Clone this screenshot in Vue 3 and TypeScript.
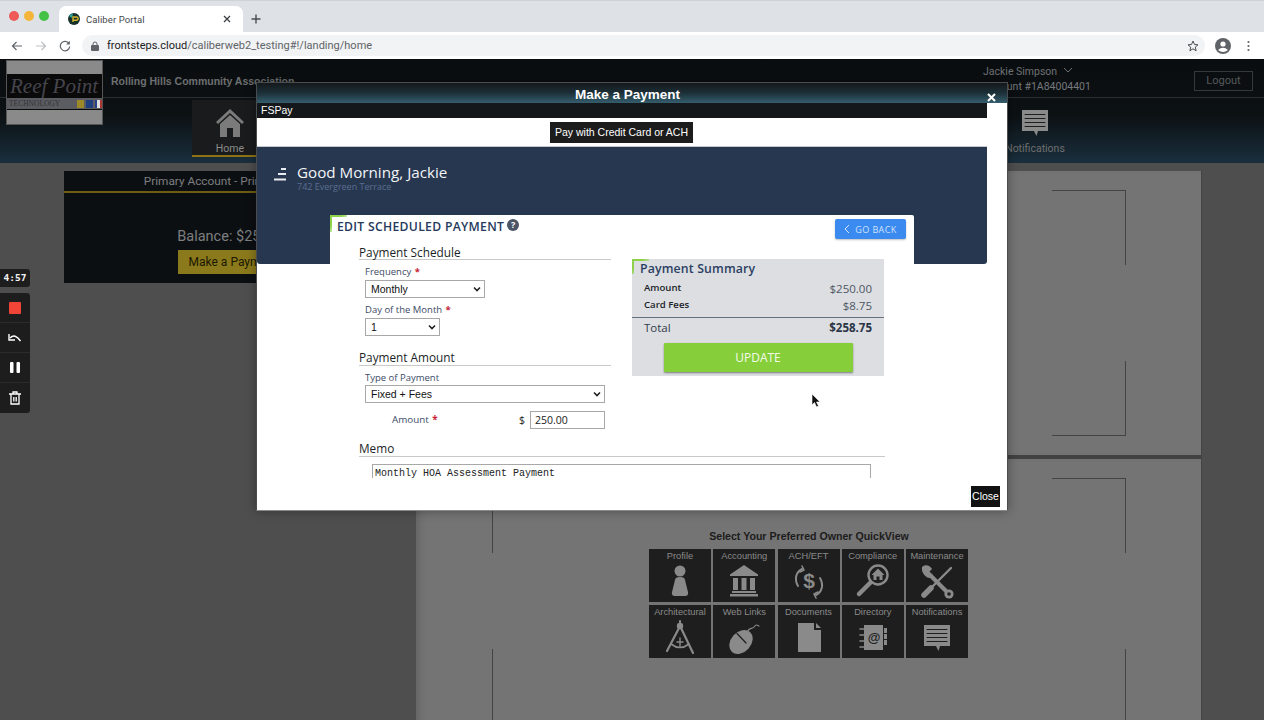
<script setup lang="ts">
type Shape = { t: string; a: Record<string, string | number>; x?: string }
const ink = '#8a8a8a'
const bg = '#1e1e1e'
const fill = (d: string, color = ink): Shape => ({ t: 'path', a: { d, fill: color } })
const line = (d: string, w = 2, color = ink): Shape => ({
  t: 'path',
  a: { d, fill: 'none', stroke: color, 'stroke-width': w, 'stroke-linecap': 'round', 'stroke-linejoin': 'round' },
})
const dot = (cx: number, cy: number, r: number, color = ink): Shape => ({ t: 'circle', a: { cx, cy, r, fill: color } })
const glyph = (x: number, y: number, size: number, s: string, color = ink): Shape => ({
  t: 'text',
  a: { x, y, 'font-size': size, 'font-weight': 700, 'text-anchor': 'middle', fill: color, 'font-family': 'Liberation Sans, sans-serif' },
  x: s,
})

const bubble: Shape[] = [
  fill('M5 5H31V26H21L19.5 31L17 26H5Z'),
  line('M8 9.5H28M8 13.5H28M8 17.5H28M8 21.5H28', 1, bg),
]

const tiles: { label: string; shapes: Shape[] }[] = [
  {
    label: 'Profile',
    shapes: [dot(18, 7, 5.5), fill('M13 16c0-2 2-3 5-3s5 1 5 3l3 12c.5 3-1 4-3 4H13c-2 0-3.5-1-3-4z')],
  },
  {
    label: 'Accounting',
    shapes: [
      fill('M18 1L32 10.5V12H4V10.5Z'),
      fill('M7 14h5v12H7zM15.5 14h5v12h-5zM24 14h5v12h-5z'),
      fill('M6 27h24v2H6zM4 30h28v2.5H4z'),
    ],
  },
  {
    label: 'ACH/EFT',
    shapes: [
      glyph(18, 24, 21, '$'),
      line('M11 5C5 8 3 15 7 22', 2),
      line('M11 2L13 6L9 8', 1.6),
      line('M25 31C31 28 33 21 29 14', 2),
      line('M25 34L23 30L27 28', 1.6),
    ],
  },
  {
    label: 'Compliance',
    shapes: [
      { t: 'circle', a: { cx: 23, cy: 11, r: 9.5, fill: 'none', stroke: ink, 'stroke-width': 2.4 } },
      fill('M23 4.5L29.5 11H27.5V16H24.5V12.5H21.5V16H18.5V11H16.5Z'),
      line('M15.5 18.5L4 30', 4.5),
    ],
  },
  {
    label: 'Maintenance',
    shapes: [
      line('M32 4L10 26', 2.4),
      line('M12 24L5 31', 5.5),
      line('M8 8L30 30', 4),
      fill('M3 3C6 0 11 1 13 5L10 8L14 11L11 14C7 14 2 9 3 3Z'),
      dot(30, 30, 4.6),
      dot(30, 30, 1.8, bg),
    ],
  },
  {
    label: 'Architectural',
    shapes: [
      dot(18, 6, 3.2),
      line('M18 1V4', 2),
      line('M16.5 9L5 31M19.5 9L31 33', 2.2),
      line('M9 24Q18 31 27 24', 1.6),
      line('M18 18V27M15 22H21', 1.4),
    ],
  },
  {
    label: 'Web Links',
    shapes: [
      { t: 'ellipse', a: { cx: 15, cy: 22, rx: 10, ry: 13.5, fill: ink, transform: 'rotate(42 15 22)' } },
      line('M11 13.5L20 23', 1.2, bg),
      line('M21 13C23 6 26 10 28 7S31 5 33 6', 1.2),
    ],
  },
  {
    label: 'Documents',
    shapes: [fill('M7 3H23V10H30V32H7Z'), fill('M25 3L30 8H25Z')],
  },
  {
    label: 'Directory',
    shapes: [
      fill('M9 5H28V30H9Z'),
      fill('M29 8h3v5h-3zM29 14h3v5h-3zM29 20h3v5h-3z'),
      line('M5 9H11M5 15H11M5 21H11M5 27H11', 1.6),
      glyph(19, 22, 13, '@', bg),
    ],
  },
  { label: 'Notifications', shapes: bubble },
]

const corners = ['tl', 'tr', 'bl', 'br']
</script>

<template>
  <div class="screen">
    <div class="tabstrip">
      <div class="lights">
        <span class="light red"></span><span class="light amber"></span><span class="light green"></span>
      </div>
      <div class="tab">
        <svg class="favicon" viewBox="0 0 12 12" width="12" height="12">
          <circle cx="6" cy="6" r="6" fill="#16302c" />
          <path d="M1 3Q2 1 5 1L4 5Z" fill="#2aa6a0" />
          <path d="M5 9V4H8.5A1.6 1.6 0 0 1 8.5 7.2H5" fill="none" stroke="#d8b52c" stroke-width="1.4" />
        </svg>
        <span class="tab-title">Caliber Portal</span>
        <svg class="tab-x" viewBox="0 0 8 8" width="8" height="8"><path d="M1 1L7 7M7 1L1 7" stroke="#3c4043" stroke-width="1.3" /></svg>
      </div>
      <svg class="new-tab" viewBox="0 0 10 10" width="10" height="10"><path d="M5 .5V9.500M.5 5H9.500" stroke="#4a4d51" stroke-width="1.4" /></svg>
    </div>

    <div class="toolbar">
      <svg viewBox="0 0 12 12" width="12" height="12"><path d="M11 6H1.500M5.500 2L1.500 6L5.500 10" fill="none" stroke="#5f6368" stroke-width="1.2" /></svg>
      <svg viewBox="0 0 12 12" width="12" height="12"><path d="M1 6H10.500M6.500 2L10.500 6L6.500 10" fill="none" stroke="#bcbfc3" stroke-width="1.2" /></svg>
      <svg viewBox="0 0 12 12" width="12" height="12"><path d="M10 3.600A4.700 4.700 0 1 0 10.700 6.500" fill="none" stroke="#5f6368" stroke-width="1.2" /><path d="M10.800 .8V4.400H7.200Z" fill="#5f6368" /></svg>
      <div class="omnibox">
        <svg viewBox="0 0 8 10" width="8" height="10"><path d="M2 4V3A2 2 0 0 1 6 3V4" fill="none" stroke="#5f6368" stroke-width="1" /><rect y="4" width="8" height="6" rx="1" fill="#5f6368" /></svg>
        <span class="url"><span class="host">frontsteps.cloud</span>/caliberweb2_testing#!/landing/home</span>
        <svg class="star" viewBox="0 0 12 12" width="12" height="12"><path d="M6 1L7.500 4.500L11 4.800L8.300 7.100L9.100 10.800L6 8.800L2.900 10.800L3.700 7.100L1 4.800L4.500 4.500Z" fill="none" stroke="#4a4d51" stroke-width="1" /></svg>
      </div>
      <svg class="avatar" viewBox="0 0 16 16" width="16" height="16"><circle cx="8" cy="8" r="8" fill="#5f6368" /><circle cx="8" cy="6" r="2.600" fill="#fff" /><path d="M3 12Q8 7.500 13 12Q8 16 3 12Z" fill="#fff" /></svg>
      <svg class="kebab" viewBox="0 0 3 12" width="3" height="12"><circle cx="1.500" cy="2" r="1.100" fill="#5f6368" /><circle cx="1.500" cy="6" r="1.100" fill="#5f6368" /><circle cx="1.500" cy="10" r="1.100" fill="#5f6368" /></svg>
    </div>

    <div class="page">
      <header class="site-header">
        <div class="logo">
          <div class="logo-band">
            <div class="logo-script">Reef Point</div>
            <div class="logo-strip">
              <span>TECHNOLOGY</span>
              <i class="flag f1"></i><i class="flag f2"></i><i class="flag f3"></i>
            </div>
          </div>
        </div>
        <div class="topline">
          <div class="assoc">Rolling Hills Community Association</div>
          <div class="user">
            <div class="user-name">Jackie Simpson
              <svg viewBox="0 0 10 6" width="10" height="6"><path d="M1 1L5 5L9 1" fill="none" stroke="#6e7275" stroke-width="1" /></svg>
            </div>
            <div class="user-acct">Account #1A84004401</div>
          </div>
          <div class="logout">Logout</div>
        </div>
        <nav class="nav">
          <div class="nav-item active">
            <svg viewBox="0 0 30 30" width="30" height="30"><path d="M15 1L29 14L27 16L15 5L3 16L1 14Z" fill="#7b7b7b" /><path d="M5 16L15 7L25 16V29H18V20H12V29H5Z" fill="#7b7b7b" /></svg>
            <span>Home</span>
          </div>
          <div class="nav-item">
            <svg viewBox="3 3 30 30" width="30" height="30"><component :is="s.t" v-for="(s, i) in bubble" :key="i" v-bind="s.a" /></svg>
            <span>Notifications</span>
          </div>
        </nav>
      </header>

      <main class="content">
        <section class="account">
          <div class="account-head">Primary Account - Primary Residence</div>
          <div class="balance">Balance: $258.75</div>
          <div class="pay">Make a Payment</div>
        </section>
        <div class="panels">
          <section class="panel upper">
            <div class="frame"><i v-for="c in corners" :key="c" :class="['corner', c]"></i></div>
          </section>
          <section class="panel lower">
            <div class="frame quick">
              <i v-for="c in corners" :key="c" :class="['corner', c]"></i>
              <h3>Select Your Preferred Owner QuickView</h3>
              <div class="tiles">
                <div v-for="t in tiles" :key="t.label" class="tile">
                  <span>{{ t.label }}</span>
                  <svg viewBox="0 0 36 36" width="36" height="36">
                    <component :is="s.t" v-for="(s, i) in t.shapes" :key="i" v-bind="s.a">{{ s.x }}</component>
                  </svg>
                </div>
              </div>
            </div>
          </section>
        </div>
      </main>

      <div class="modal">
        <div class="modal-title">
          <span>Make a Payment</span>
          <svg class="modal-x" viewBox="0 0 9 9" width="9" height="9"><path d="M1 1L8 8M8 1L1 8" stroke="#fff" stroke-width="2" /></svg>
        </div>
        <div class="modal-body">
          <div class="fspay">FSPay</div>
          <div class="pay-row"><div class="pay-method">Pay with Credit Card or ACH</div></div>
          <div class="hero">
            <svg class="menu-icon" viewBox="0 0 13 14" width="13" height="14"><path d="M7 1H12V3H7ZM4 6H12V8H4ZM0 11.500H12V13.500H0Z" fill="#e8ebef" /></svg>
            <div>
              <div class="greeting">Good Morning, Jackie</div>
              <div class="address">742 Evergreen Terrace</div>
            </div>
          </div>
          <div class="card">
            <div class="card-head">
              <h2 class="accent">EDIT SCHEDULED PAYMENT</h2>
              <span class="help">?</span>
              <div class="go-back">
                <svg viewBox="0 0 6 10" width="6" height="10"><path d="M5 1L1 5L5 9" fill="none" stroke="#d8e8fb" stroke-width="1" /></svg>
                GO BACK
              </div>
            </div>
            <div class="columns">
              <div>
                <h4>Payment Schedule</h4>
                <div class="field">
                  <label>Frequency <b>*</b></label>
                  <select class="sel-freq"><option>Monthly</option></select>
                </div>
                <div class="field">
                  <label>Day of the Month <b>*</b></label>
                  <select class="sel-day"><option>1</option></select>
                </div>
                <h4 class="second">Payment Amount</h4>
                <div class="field tight">
                  <label>Type of Payment</label>
                  <select class="sel-type"><option>Fixed + Fees</option></select>
                </div>
                <div class="amount-row">
                  <label>Amount <b>*</b></label>
                  <span class="dollar">$</span>
                  <input value="250.00" />
                </div>
              </div>
              <aside class="summary">
                <h3 class="accent">Payment Summary</h3>
                <div class="sum-row"><span>Amount</span><em>$250.00</em></div>
                <div class="sum-row"><span>Card Fees</span><em>$8.75</em></div>
                <div class="sum-total"><span>Total</span><strong>$258.75</strong></div>
                <div class="update">UPDATE</div>
              </aside>
            </div>
            <h4 class="memo-head">Memo</h4>
            <textarea class="memo">Monthly HOA Assessment Payment</textarea>
          </div>
        </div>
        <div class="modal-foot"><div class="close">Close</div></div>
      </div>

      <div class="recorder">
        <div class="timer">4:57</div>
        <div class="rec-tools">
          <div class="rec-btn"><span class="stop"></span></div>
          <div class="rec-btn">
            <svg viewBox="0 0 14 12" width="14" height="12"><path d="M2 6Q7 1 12.500 9" fill="none" stroke="#fff" stroke-width="1.400" /><path d="M1 2V8H7" fill="none" stroke="#fff" stroke-width="1.400" /></svg>
          </div>
          <div class="rec-btn">
            <svg viewBox="0 0 10 11" width="10" height="11"><rect width="3.500" height="11" rx="1" fill="#fff" /><rect x="6.500" width="3.500" height="11" rx="1" fill="#fff" /></svg>
          </div>
          <div class="rec-btn">
            <svg viewBox="0 0 12 14" width="12" height="14"><path d="M0 3H12M4 3V1H8V3M2 3V13H10V3M4.800 6V10.500M7.200 6V10.500" fill="none" stroke="#fff" stroke-width="1.300" /></svg>
          </div>
        </div>
      </div>

      <svg class="cursor" viewBox="0 0 10 14" width="10" height="14"><path d="M1 0V11L3.500 8.500L5.500 13L7.500 12L5.500 8H9Z" fill="#111" stroke="#fff" stroke-width=".6" /></svg>
    </div>
  </div>
</template>

<style>
html, body { margin: 0; background: #4e4e4e; }
</style>

<style scoped>
.screen { width: 1264px; height: 720px; overflow: hidden; display: flex; flex-direction: column; font-family: "Liberation Sans", Arial, sans-serif; }

.tabstrip { height: 32px; flex: none; background: #dee1e6; display: flex; align-items: flex-end; box-sizing: border-box; border-top: 1px solid #cfd2d6; }
.lights { width: 59px; height: 31px; padding-left: 9px; box-sizing: border-box; display: flex; gap: 5px; align-items: center; }
.light { width: 10px; height: 10px; border-radius: 50%; margin-top: -1px; }
.red { background: #ee5a58; }
.amber { background: #f5b53c; }
.green { background: #43c246; }
.tab { width: 184px; height: 26px; background: #fff; border-radius: 7px 7px 0 0; display: flex; align-items: center; padding: 0 12px 0 9px; box-sizing: border-box; }
.tab-title { font-size: 9.5px; color: #45484c; margin-left: 6px; flex: 1; font-family: Roboto, sans-serif; letter-spacing: .1px; }
.new-tab { margin: 0 0 8px 8px; }

.toolbar { height: 27px; flex: none; background: #fff; display: flex; align-items: center; padding-left: 11px; gap: 12px; box-sizing: border-box; }
.omnibox { margin-left: -1px; width: 1123px; height: 21px; background: #f1f3f4; border-radius: 11px; display: flex; align-items: center; padding: 0 6px 0 9px; box-sizing: border-box; }
.url { margin-left: 8px; flex: 1; font-size: 11px; color: #5f6368; font-family: Roboto, sans-serif; }
.host { color: #202124; }
.avatar { margin-left: -2px; }
.kebab { margin-left: 3.5px; }

.page { position: relative; flex: 1; overflow: hidden; background: #4e4e4e; }

.site-header { height: 104px; background: linear-gradient(#0a0d0f 0%, #0c1114 55%, #1a2f3d 100%); position: relative; }
.logo { position: absolute; left: 6px; top: 1px; width: 97px; height: 65px; background: #8a8a8a; box-sizing: border-box; border: 1px solid #555; padding-top: 13px; }
.logo-band { height: 36px; background: #0a0a0a; overflow: hidden; }
.logo-script { font: italic 400 21px/24px "Liberation Serif", serif; color: #45454c; white-space: nowrap; padding-left: 3px; }
.logo-strip { height: 11px; background: #5b5b62; display: flex; align-items: center; font: 7.5px "Liberation Serif", serif; color: #333; padding-left: 2px; gap: 2px; }
.logo-strip span { flex: 1; }
.flag { width: 7px; height: 8px; display: block; }
.f1 { background: #9c8a2a; }
.f2 { background: #1f3f80; }
.f3 { background: linear-gradient(90deg, #2a3f8c 33%, #ddd 33% 66%, #a33 66%); }

.topline { height: 39px; border-bottom: 1px solid #2a2f32; display: flex; align-items: center; padding: 7px 11px 0 111px; box-sizing: border-box; }
.assoc { flex: 1; font-size: 10.500px; font-weight: 700; color: #6d6f70; margin-top: -1px; }
.user { width: 211px; font: 10.500px/15px Roboto, sans-serif; color: #6e7275; margin-top: -5px; }
.user-name svg { margin-left: 3px; vertical-align: 2px; }
.user-acct { color: #75797c; }
.logout { width: 59px; height: 20px; border: 1px solid #34393c; box-sizing: border-box; text-align: center; font: 11px/18px Roboto, sans-serif; color: #55595c; margin-top: -2px; }

.nav { display: flex; justify-content: space-between; padding: 2px 191px 0 192px; }
.nav-item { width: 76px; height: 57px; display: flex; flex-direction: column; align-items: center; box-sizing: border-box; padding-top: 8px; font: 10.500px/12px Roboto, sans-serif; color: #6f6f6f; white-space: nowrap; }
.nav-item span { margin-top: 5px; }
.nav-item.active { background: #1a1b1c; border-bottom: 2px solid #8c7414; color: #8b8b8b; }

.content { display: flex; padding: 8px 0 0 64px; }
.account { width: 338px; height: 112px; flex: none; margin-right: 14px; background: #0c0f12; text-align: center; font-family: Roboto, sans-serif; color: #7d7f80; }
.account-head { height: 20px; padding-left: 16px; border-bottom: 2px solid #6f5c10; font-size: 11.800px; line-height: 20px; margin-bottom: 34px; white-space: nowrap; }
.balance { font-size: 14.500px; line-height: 20px; }
.pay { width: 110px; height: 24px; margin: 3px auto 0; background: #8b7a1b; color: #1b1803; font-size: 12px; line-height: 24px; text-align: center; }

.panels { width: 785px; flex: none; }
.panel { background: #747474; padding: 19px 75px; box-sizing: border-box; box-shadow: inset 8px 0 8px -6px #606060, 1px 0 0 #444; }
.upper { height: 288px; border-bottom: 4px solid #424242; }
.lower { height: 300px; }
.frame { position: relative; height: 246px; width: 634px; margin-left: 1px; margin-right: -1px; box-sizing: border-box; }
.corner { position: absolute; width: 74px; height: 75px; box-sizing: border-box; border: 0 solid #444; display: block; }
.tl { left: 0; top: 0; border-width: 1px 0 0 1px; }
.tr { right: 0; top: 0; border-width: 1px 1px 0 0; }
.bl { left: 0; bottom: 0; border-width: 0 0 1px 1px; }
.br { right: 0; bottom: 0; border-width: 0 1px 1px 0; }

.quick { display: flex; flex-direction: column; align-items: center; padding-top: 52px; }
.quick h3 { margin: 0 0 7px; font-size: 10.600px; line-height: 12px; font-weight: 700; color: #1c1c1c; white-space: nowrap; }
.tiles { display: grid; grid-template-columns: repeat(5, 62px); grid-auto-rows: 53px; gap: 3px 2.25px; width: 319px; margin-left: -1px; }
.tile { background: #1e1e1e; display: flex; flex-direction: column; align-items: center; padding-top: 2px; box-sizing: border-box; font-size: 9.300px; line-height: 11px; color: #8a8a8a; white-space: nowrap; overflow: hidden; }
.tile svg { margin-top: 2px; flex: none; }

.modal { position: absolute; left: 256px; top: 23px; width: 752px; height: 429px; box-sizing: border-box; border: 1px solid #4a4d50; border-bottom-color: #8a8a8a; background: #fff; display: flex; flex-direction: column; box-shadow: 0 0 10px rgba(0, 0, 0, .35); }
.modal-title { height: 20px; flex: none; background: linear-gradient(#14181b 0%, #1c3038 50%, #355e6e 100%); color: #fff; font-size: 13.500px; font-weight: 700; display: flex; justify-content: center; align-items: center; position: relative; }
.modal-title span { margin-top: 3px; margin-left: -9px; }
.modal-x { position: absolute; right: 11px; top: 10px; }
.modal-body { width: 730px; height: 375px; flex: none; overflow: hidden; }
.fspay { height: 15px; background: #14181b; color: #fff; font-size: 10.500px; line-height: 15px; padding-left: 4px; }
.pay-row { height: 29px; display: flex; justify-content: center; align-items: flex-start; padding-top: 4px; box-sizing: border-box; border-bottom: 1px solid #c8c8c8; }
.pay-method { margin-left: -1px; width: 143px; height: 21px; background: #1c1c1c; color: #fff; font-size: 10.500px; line-height: 21px; text-align: center; }
.hero { height: 117px; background: #27374f; border-radius: 0 0 3px 3px; display: flex; align-items: flex-start; padding: 16px 0 0 17px; box-sizing: border-box; font-family: "Open Sans", sans-serif; }
.menu-icon { margin: 4px 10px 0 0; flex: none; }
.greeting { font-size: 15.200px; line-height: 18px; color: #f2f4f7; }
.address { font-size: 9px; line-height: 11px; color: #5a6e90; }

.card { position: relative; margin: -49px 0 0 73px; width: 584px; height: 300px; background: #fff; border-radius: 2px; padding: 0 29px; box-sizing: border-box; font-family: "Open Sans", sans-serif; color: #1d2b44; }
.card-head { height: 30px; margin: 0 -21px 0 -22px; display: flex; align-items: flex-start; }
.accent { position: relative; }
.accent::before { content: ""; position: absolute; width: 17px; height: 17px; border-top: 2px solid #8ed24a; border-left: 2px solid #8ed24a; box-sizing: border-box; -webkit-mask-image: linear-gradient(135deg, #000 35%, transparent 75%); mask-image: linear-gradient(135deg, #000 35%, transparent 75%); }
.card-head h2 { margin: 3px 0 0; font-size: 12.200px; line-height: 17px; font-weight: 600; letter-spacing: .3px; color: #24395c; white-space: nowrap; }
.card-head h2::before { left: -7px; top: -3px; }
.help { margin: 4px 0 0 3px; width: 12px; height: 12px; border-radius: 50%; background: #4c5566; color: #fff; font-size: 9px; font-weight: 700; line-height: 12px; text-align: center; }
.go-back { margin: 4px 0 0 auto; width: 71px; height: 20px; background: #3b8aef; border-radius: 2px; box-shadow: 0 1px 2px rgba(0, 0, 0, .25); color: #cfe2fb; font-size: 9px; letter-spacing: .4px; display: flex; align-items: center; justify-content: center; gap: 5px; }

.columns { display: grid; grid-template-columns: 252px 252px; column-gap: 21px; }
h4 { margin: 0; font-size: 11.800px; line-height: 14px; font-weight: 400; color: #1b1f27; border-bottom: 1px solid #c9c9c9; white-space: nowrap; }
.columns h4 { height: 15px; box-sizing: border-box; }
.columns h4.second { line-height: 12px; }
.field { padding-left: 6px; margin-top: 6px; }
.field.tight { margin-top: 6px; }
.tight label { margin-bottom: 1px; }
label { display: block; font-size: 9.500px; line-height: 12px; font-weight: 500; color: #3c4a66; margin-bottom: 2px; white-space: nowrap; }
label b { color: #c81e35; font-weight: 700; margin-left: 1px; }
select { display: block; height: 18px; box-sizing: border-box; border: 1px solid #a8a8a8; border-radius: 0; background: #fff url("data:image/svg+xml,%3Csvg xmlns='http://www.w3.org/2000/svg' width='8' height='6'%3E%3Cpath d='M1 1.500L4 4.500L7 1.500' fill='none' stroke='%23222' stroke-width='1.600'/%3E%3C/svg%3E") no-repeat right 3px center; appearance: none; -webkit-appearance: none; font: 10.500px "Liberation Sans", sans-serif; color: #111; padding: 0 0 1px 5px; margin: 0; }
.sel-freq { width: 120px; }
.sel-day { width: 75px; }
.sel-type { width: 240px; }
.second { margin-top: 15px; }
.amount-row { display: flex; align-items: center; margin-top: 8px; padding-left: 33px; height: 18px; width: 246px; box-sizing: border-box; }
.amount-row label { margin: 0; flex: 1; font-size: 9.800px; }
.dollar { font-size: 10.500px; margin-right: 5px; color: #222; }
input { width: 75px; height: 18px; box-sizing: border-box; border: 1px solid #a8a8a8; font: 10.500px "Open Sans", sans-serif; color: #222; padding: 0 4px; outline: none; }

.summary { margin-top: 14px; height: 117px; background: #dcdee1; box-sizing: border-box; position: relative; }
.summary h3 { margin: 0; padding: 2px 0 0 8px; font-size: 12.300px; line-height: 16px; font-weight: 600; letter-spacing: .15px; color: #2b3f63; }
.summary h3::before { left: 0; top: 0; width: 17px; height: 15px; }
.sum-row { display: flex; justify-content: space-between; align-items: flex-start; padding: 0 12px; height: 17px; }
.sum-row:first-of-type { margin-top: 2px; }
.sum-row span { font-size: 9.600px; line-height: 15px; font-weight: 600; color: #1a1f2a; padding-top: 1px; }
.sum-row em { font-style: normal; font-size: 11.500px; line-height: 19px; color: #4d5664; }
.sum-total { display: flex; justify-content: space-between; margin: 4px 0 0; height: 25px; padding: 0 12px; border-top: 1px solid #66717f; font-size: 11.500px; line-height: 19px; color: #323c4c; }
.sum-total strong { font-weight: 700; color: #2a3546; }
.update { margin: 0 auto; width: 189px; height: 29px; background: #86cf3b; border-radius: 1px; box-shadow: 0 1px 2px rgba(0, 0, 0, .45); color: #f4faeb; font-size: 12px; line-height: 29px; text-align: center; }

.memo-head { margin-top: 12px; height: 16px; box-sizing: border-box; line-height: 15px; }
.memo { display: block; margin: 7px 0 0 13px; width: 499px; height: 40px; box-sizing: border-box; border: 1px solid #a8a8a8; padding: 2px; font: 10px/14px "Liberation Mono", monospace; color: #222; resize: none; outline: none; }

.modal-foot { flex: 1; display: flex; justify-content: flex-end; align-items: flex-start; padding: 8px 7px 0 0; background: #fff; }
.close { width: 29px; height: 21px; background: #121212; color: #fff; font-size: 10.500px; line-height: 21px; text-align: center; }

.recorder { position: absolute; left: 0; top: 210px; width: 30px; }
.timer { height: 18px; background: #1d1d1d; border-radius: 0 3px 3px 0; color: #f2f2f2; font: 700 9.500px/18px "DejaVu Sans Mono", monospace; text-align: center; }
.rec-tools { margin-top: 6px; background: #1d1d1d; border-radius: 0 3px 3px 0; }
.rec-btn { height: 30px; display: flex; align-items: center; justify-content: center; border-bottom: 1px solid #2b2b2b; box-sizing: border-box; }
.rec-btn:last-child { border-bottom: 0; }
.stop { width: 12px; height: 12px; background: #ef4436; border-radius: 1px; display: block; }

.cursor { position: absolute; left: 811px; top: 335px; }
</style>
